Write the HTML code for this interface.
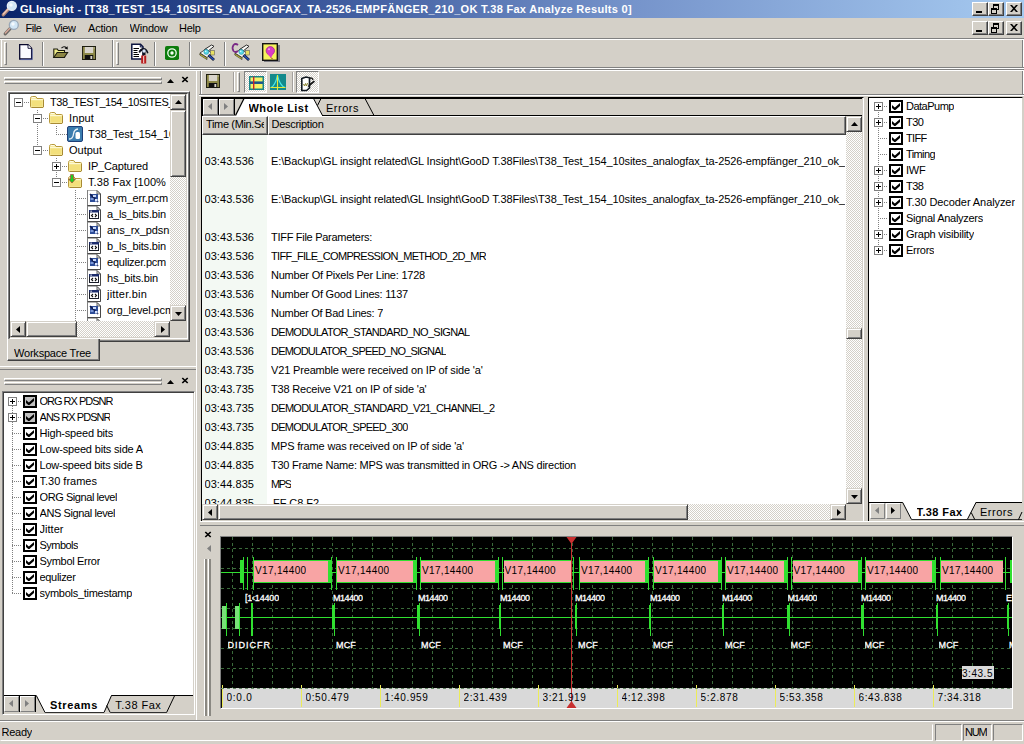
<!DOCTYPE html><html><head><meta charset="utf-8"><title>GLInsight</title><style>
    *{box-sizing:border-box;margin:0;padding:0}
    html,body{width:1024px;height:744px;overflow:hidden;background:#d4d0c8}
    body{position:relative;font-family:"Liberation Sans",sans-serif;font-size:11px;color:#000;line-height:13px}
    .a{position:absolute}
    .t{position:absolute;white-space:nowrap;overflow:hidden}
    .hl{position:absolute;height:1px}
    .vl{position:absolute;width:1px}
    .btn{position:absolute;background:#d4d0c8;border:1px solid;border-color:#fff #404040 #404040 #fff;box-shadow:inset -1px -1px 0 #808080}
    .sb{position:absolute;background:#d4d0c8;border:1px solid;border-color:#d4d0c8 #404040 #404040 #d4d0c8;box-shadow:inset 1px 1px 0 #fff, inset -1px -1px 0 #808080}
    .trk{position:absolute;background-color:#e9e7e3;background-image:conic-gradient(#fff 25%,#d4d0c8 0 50%,#fff 0 75%,#d4d0c8 0);background-size:2px 2px}
    .sunk{position:absolute;border:1px solid;border-color:#808080 #fff #fff #808080;box-shadow:inset 1px 1px 0 #404040, inset -1px -1px 0 #d4d0c8;background:#fff}
    .cb{position:absolute;width:14px;height:13px;border:2px solid #000;background:#fff}
    .cbg{background:#c0c0c0}
    .dotH{position:absolute;height:1px;background-image:linear-gradient(90deg,#808080 50%,transparent 0);background-size:2px 1px}
    .dotV{position:absolute;width:1px;background-image:linear-gradient(180deg,#808080 50%,transparent 0);background-size:1px 2px}
    .pm{position:absolute;width:9px;height:9px;border:1px solid #808080;background:#fff}
    .pm:before{content:"";position:absolute;left:1px;top:3px;width:5px;height:1px;background:#000}
    .pm.p:after{content:"";position:absolute;left:3px;top:1px;width:1px;height:5px;background:#000}
    svg{position:absolute;overflow:visible}
    </style></head><body>
<div class="a" style="left:0;top:0;width:1024px;height:18px;background:linear-gradient(90deg,#0a246a 0%,#39569a 30%,#7694cb 62%,#a6caf0 100%)"></div>
<div class="t" style="left:20px;top:3px;font-weight:bold;color:#fff;letter-spacing:0.306px;">GLInsight - [T38_TEST_154_10SITES_ANALOGFAX_TA-2526-EMPFÄNGER_210_OK T.38 Fax Analyze Results 0]</div>
<svg style="left:1px;top:0px" width="18" height="18" viewBox="0 0 18 18">
<line x1="2.2" y1="14.8" x2="7.3" y2="9.3" stroke="#b08878" stroke-width="3.2" stroke-linecap="round"/>
<line x1="2.4" y1="14" x2="6.6" y2="9.5" stroke="#f0c8b8" stroke-width="1.3" stroke-linecap="round"/>
<circle cx="10.8" cy="5.9" r="4.5" fill="#d2e6f5" stroke="#e6eef6" stroke-width="1.3"/>
<circle cx="10" cy="5" r="1.7" fill="#fff" opacity=".75"/>
</svg>
<svg style="left:3.4px;top:19.4px" width="18" height="18" viewBox="0 0 18 18">
<line x1="2.2" y1="14.8" x2="7.3" y2="9.3" stroke="#6e6a66" stroke-width="3.2" stroke-linecap="round"/>
<line x1="2.4" y1="14" x2="6.6" y2="9.5" stroke="#d8a898" stroke-width="1.3" stroke-linecap="round"/>
<circle cx="10.8" cy="5.9" r="4.5" fill="#d2e6f5" stroke="#9aa8b8" stroke-width="1.3"/>
<circle cx="10" cy="5" r="1.7" fill="#fff" opacity=".75"/>
</svg>
<div class="btn" style="left:972px;top:2px;width:16px;height:14px"><div class="a" style="left:3px;top:8px;width:6px;height:2px;background:#000"></div></div>
<div class="btn" style="left:988px;top:2px;width:16px;height:14px"><div class="a" style="left:4px;top:1px;width:6px;height:6px;border:1px solid #000;border-top-width:2px"></div><div class="a" style="left:2px;top:5px;width:6px;height:6px;border:1px solid #000;border-top-width:2px;background:#d4d0c8"></div></div>
<div class="btn" style="left:1006px;top:2px;width:16px;height:14px"><svg style="left:3px;top:2px" width="8" height="7" viewBox="0 0 8 7"><path d="M0 0H2L4 2.2L6 0H8L5 3.5L8 7H6L4 4.8L2 7H0L3 3.5Z" fill="#000"/></svg></div>
<div class="btn" style="left:972px;top:21px;width:16px;height:14px"><div class="a" style="left:3px;top:8px;width:6px;height:2px;background:#000"></div></div>
<div class="btn" style="left:988px;top:21px;width:16px;height:14px"><div class="a" style="left:4px;top:1px;width:6px;height:6px;border:1px solid #000;border-top-width:2px"></div><div class="a" style="left:2px;top:5px;width:6px;height:6px;border:1px solid #000;border-top-width:2px;background:#d4d0c8"></div></div>
<div class="btn" style="left:1006px;top:21px;width:16px;height:14px"><svg style="left:3px;top:2px" width="8" height="7" viewBox="0 0 8 7"><path d="M0 0H2L4 2.2L6 0H8L5 3.5L8 7H6L4 4.8L2 7H0L3 3.5Z" fill="#000"/></svg></div>
<div class="t" style="left:25.5px;top:22px;letter-spacing:-0.434px;">File</div>
<div class="t" style="left:53.5px;top:22px;letter-spacing:-0.414px;">View</div>
<div class="t" style="left:88px;top:22px;letter-spacing:-0.180px;">Action</div>
<div class="t" style="left:129.5px;top:22px;letter-spacing:-0.188px;">Window</div>
<div class="t" style="left:179px;top:22px;letter-spacing:-0.281px;">Help</div>
<div class="hl" style="left:0;top:38px;width:1024px;background:#808080"></div>
<div class="hl" style="left:0;top:39px;width:1024px;background:#fff"></div>
<div class="vl" style="left:1px;top:40px;height:27px;background:#fff"></div>
<div class="hl" style="left:0;top:67px;width:1024px;background:#808080"></div>
<div class="hl" style="left:0;top:68px;width:1024px;background:#fff"></div>
<div class="hl" style="left:0;top:69px;width:1024px;background:#808080"></div>
<div class="hl" style="left:0;top:70px;width:1024px;background:#fff"></div>
<div class="a" style="left:4px;top:42px;width:3px;height:23px;border:1px solid;border-color:#fff #808080 #808080 #fff"></div>
<div class="a" style="left:116px;top:42px;width:3px;height:23px;border:1px solid;border-color:#fff #808080 #808080 #fff"></div>
<div class="vl" style="left:112px;top:40px;height:27px;background:#808080"></div><div class="vl" style="left:113px;top:40px;height:27px;background:#fff"></div>
<div class="vl" style="left:42px;top:42px;height:24px;background:#808080"></div><div class="vl" style="left:43px;top:42px;height:24px;background:#fff"></div>
<div class="vl" style="left:154px;top:42px;height:24px;background:#808080"></div><div class="vl" style="left:155px;top:42px;height:24px;background:#fff"></div>
<div class="vl" style="left:189px;top:42px;height:24px;background:#808080"></div><div class="vl" style="left:190px;top:42px;height:24px;background:#fff"></div>
<div class="vl" style="left:224px;top:42px;height:24px;background:#808080"></div><div class="vl" style="left:225px;top:42px;height:24px;background:#fff"></div>
<svg style="left:19px;top:44px" width="14" height="16" viewBox="0 0 14 16">
<path d="M.7 .7L9 .7L12.6 4.3L12.6 15L.7 15Z" fill="#fbfbff" stroke="#08082c" stroke-width="1.3"/>
<path d="M9 .7L9 4.3L12.6 4.3" fill="#fff" stroke="#08082c" stroke-width=".9"/>
<path d="M13.2 5L13.2 15.6L1.5 15.6" fill="none" stroke="#5060a8" stroke-width=".8"/>
</svg><svg style="left:53px;top:45px" width="16" height="14" viewBox="0 0 16 14">
<path d="M8.5 3.2Q11 0.3 13.6 3" fill="none" stroke="#101010" stroke-width="1.1"/><path d="M11.6 3.6L14.8 4.6L14.6 1.3Z" fill="#101010"/>
<path d="M.8 4L4.3 4L5.3 5.5L11.5 5.5L11.5 12.5L.8 12.5Z" fill="#eeec88" stroke="#1c1c10" stroke-width="1.1"/>
<path d="M.8 12.5L4.2 7.5L14.6 7.5L11.3 12.5Z" fill="#8c8644" stroke="#1c1c10" stroke-width="1.1"/>
</svg><svg style="left:82px;top:46px" width="14" height="14" viewBox="0 0 15 14" preserveAspectRatio="none">
<rect x=".5" y=".5" width="14" height="13" fill="#8c8848" stroke="#1c1c10" stroke-width="1"/>
<rect x="3" y="1" width="9" height="6" fill="#d8d4cc"/>
<rect x="3" y="9" width="9" height="4.5" fill="#101010"/>
<rect x="9" y="10" width="2" height="3" fill="#d8d4cc"/>
<rect x="12.5" y="1.5" width="1" height="1" fill="#d8d4cc"/>
</svg><svg style="left:131px;top:43px" width="19" height="21" viewBox="0 0 19 21">
<path d="M.8 1.2L9.5 1.2L12 3.7L12 16L.8 16Z" fill="#fff" stroke="#0c1440" stroke-width="1.5"/>
<path d="M9.3 1.2L9.3 4L12 4" fill="none" stroke="#0c1440" stroke-width="1"/>
<path d="M2.5 5.5H8M2.5 7.5H6.5M2.5 9.5H6.5M2.5 11.5H8M2.5 13.5H8" stroke="#000" stroke-width="1"/>
<path d="M7.5 9Q9 5 12.5 5Q16 5 17.5 10L16 10.5Q15.5 8 14.5 8L14.5 12L11.5 12L11.5 8Q9.5 8 9 10Z" fill="#0c1020"/>
<circle cx="13" cy="8" r="1.7" fill="#d8e4f8"/>
<rect x="10.2" y="12.5" width="5" height="8" fill="#b81c1c"/><rect x="12.2" y="13" width="1" height="7" fill="#f4e0e0"/>
</svg><svg style="left:165px;top:46px" width="14" height="14" viewBox="0 0 14 14">
<rect x="0" y="0" width="14" height="14" rx="1.8" fill="#0c7c0c"/>
<circle cx="7" cy="7" r="4.2" fill="none" stroke="#f0fff0" stroke-width="1.3"/>
<circle cx="7" cy="7" r="1.7" fill="#f4fff4"/>
</svg><svg style="left:199px;top:44px" width="17" height="17" viewBox="0 0 17 17">
<path d="M5.5 5.5L12.5 1L15 2.3L8.5 7.5Z" fill="#fbfbf8" stroke="#181818" stroke-width=".9"/>
<path d="M1 9L7 5L13 9.5L8 13.5Z" fill="#f4f4ee" stroke="#282828" stroke-width=".8"/>
<path d="M.8 9.5L8 14L8 15.6L.8 11Z" fill="#e6dc30" stroke="#202020" stroke-width=".6"/>
<rect x="11.5" y="6.5" width="4" height="4.5" fill="#e8e060" stroke="#606060" stroke-width=".6"/>
<circle cx="7.3" cy="8" r="2.4" fill="#58d8e8" stroke="#1890a8" stroke-width=".6"/>
<circle cx="6.7" cy="7.3" r=".8" fill="#e8ffff"/>
<path d="M9.5 11L15 16" stroke="#101828" stroke-width="2.8"/>
<path d="M9.8 11.2L14.8 15.8" stroke="#2850c0" stroke-width="1.4"/>
</svg><svg style="left:234px;top:44px" width="17" height="17" viewBox="0 0 17 17">
<path d="M5.5 5.5L12.5 1L15 2.3L8.5 7.5Z" fill="#fbfbf8" stroke="#181818" stroke-width=".9"/>
<path d="M1 9L7 5L13 9.5L8 13.5Z" fill="#f4f4ee" stroke="#282828" stroke-width=".8"/>
<path d="M.8 9.5L8 14L8 15.6L.8 11Z" fill="#e6dc30" stroke="#202020" stroke-width=".6"/>
<rect x="11.5" y="6.5" width="4" height="4.5" fill="#e8e060" stroke="#606060" stroke-width=".6"/>
<circle cx="7.3" cy="8" r="2.4" fill="#58d8e8" stroke="#1890a8" stroke-width=".6"/>
<circle cx="6.7" cy="7.3" r=".8" fill="#e8ffff"/>
<path d="M9.5 11L15 16" stroke="#101828" stroke-width="2.8"/>
<path d="M9.8 11.2L14.8 15.8" stroke="#2850c0" stroke-width="1.4"/>
</svg><svg style="left:231px;top:43px" width="8" height="10" viewBox="0 0 8 10"><path d="M7 2Q4.5 0 2.5 2Q0.5 5 2.5 8Q4.5 10 7 8" fill="none" stroke="#7a2a86" stroke-width="1.7"/></svg><svg style="left:262px;top:43px" width="19" height="20" viewBox="0 0 19 20">
<rect x="2" y="2" width="16" height="17" fill="#7c7c84"/>
<rect x=".7" y=".7" width="14.6" height="16.6" fill="#f6f25c" stroke="#141414" stroke-width="1.4"/>
<circle cx="8.3" cy="7.8" r="4.2" fill="#dc3cc4" stroke="#98208c" stroke-width=".7"/>
<path d="M5.2 10.8L9 15L11.2 10.8Z" fill="#dc3cc4"/>
<circle cx="7" cy="6.3" r="1" fill="#f8c0f0" opacity=".8"/>
<path d="M9 14.5L10.5 16" stroke="#902020" stroke-width="1"/>
</svg>
<div class="a" style="left:4px;top:77px;width:158px;height:3px;border:1px solid;border-color:#fff #808080 #808080 #fff"></div><div class="a" style="left:4px;top:81px;width:158px;height:3px;border:1px solid;border-color:#fff #808080 #808080 #fff"></div><svg style="left:167px;top:79px" width="7" height="4" viewBox="0 0 7 4"><path d="M0 4L3.5 0L7 4Z" fill="#000"/></svg><svg style="left:182px;top:77px" width="6" height="5" viewBox="0 0 6 5"><path d="M0.3 0L5.7 5M0.3 5L5.7 0" stroke="#000" stroke-width="1.7" fill="none"/></svg>
<div class="a" style="left:7px;top:91px;width:183px;height:251px;border:1px solid;border-color:#fff #404040 #404040 #fff;box-shadow:inset 1px 1px 0 #808080, inset -1px -1px 0 #808080"></div>
<div class="a" style="left:9px;top:93px;width:179px;height:246px;border:1px solid;border-color:#404040 #fff #fff #404040"></div>
<div class="a" style="left:10px;top:94px;width:160px;height:227px;background:#fff;overflow:hidden" id="tree1">
<div class="dotH" style="left:14px;top:8px;width:5px"></div><div class="dotV" style="left:27px;top:16px;height:40px"></div><div class="dotH" style="left:33px;top:24px;width:5px"></div><div class="dotH" style="left:33px;top:56px;width:5px"></div><div class="dotV" style="left:46px;top:32px;height:8px"></div><div class="dotH" style="left:46px;top:40px;width:11px"></div><div class="dotV" style="left:46px;top:64px;height:24px"></div><div class="dotH" style="left:52px;top:72px;width:5px"></div><div class="dotH" style="left:52px;top:88px;width:5px"></div><div class="dotV" style="left:65px;top:96px;height:132px"></div><div class="dotH" style="left:65px;top:104px;width:12px"></div><div class="dotH" style="left:65px;top:120px;width:12px"></div><div class="dotH" style="left:65px;top:136px;width:12px"></div><div class="dotH" style="left:65px;top:152px;width:12px"></div><div class="dotH" style="left:65px;top:168px;width:12px"></div><div class="dotH" style="left:65px;top:184px;width:12px"></div><div class="dotH" style="left:65px;top:200px;width:12px"></div><div class="dotH" style="left:65px;top:216px;width:12px"></div><div class="dotH" style="left:65px;top:232px;width:12px"></div><div class="pm" style="left:4px;top:4px"></div><svg style="left:19px;top:1px" width="16" height="14" viewBox="0 0 16 14">
<path d="M1.5 3.5Q1.5 1.5 3.5 1.5L6 1.5Q7.5 1.5 8 3.5L13.5 3.5Q14.5 3.5 14.5 4.5L14.5 11.5Q14.5 12.5 13.5 12.5L2.5 12.5Q1.5 12.5 1.5 11.5Z" fill="#f7eca2" stroke="#b8993c" stroke-width="1"/>
<path d="M2.5 5.5L13.5 5.5L13.5 11.5L2.5 11.5Z" fill="#f3e07c"/>
<path d="M2 4.5L13.5 4.5" stroke="#fdf8d4" stroke-width="1"/>
<path d="M2.5 2.5L6.5 2.5" stroke="#fffce8" stroke-width="1"/>
<path d="M14.5 5L14.5 12M3 12.5L14 12.5" stroke="#a88a34" stroke-width="1" fill="none"/>
</svg><div class="pm" style="left:23px;top:20px"></div><svg style="left:38px;top:17px" width="16" height="14" viewBox="0 0 16 14">
<path d="M1.5 3.5Q1.5 1.5 3.5 1.5L6 1.5Q7.5 1.5 8 3.5L13.5 3.5Q14.5 3.5 14.5 4.5L14.5 11.5Q14.5 12.5 13.5 12.5L2.5 12.5Q1.5 12.5 1.5 11.5Z" fill="#f7eca2" stroke="#b8993c" stroke-width="1"/>
<path d="M2.5 5.5L13.5 5.5L13.5 11.5L2.5 11.5Z" fill="#f3e07c"/>
<path d="M2 4.5L13.5 4.5" stroke="#fdf8d4" stroke-width="1"/>
<path d="M2.5 2.5L6.5 2.5" stroke="#fffce8" stroke-width="1"/>
<path d="M14.5 5L14.5 12M3 12.5L14 12.5" stroke="#a88a34" stroke-width="1" fill="none"/>
</svg><svg style="left:57px;top:32px" width="16" height="16" viewBox="0 0 16 16">
<rect x=".5" y=".5" width="15" height="15" rx="1.5" fill="#3b7cae" stroke="#1c3f78" stroke-width="1"/>
<path d="M2 13Q6 13 6.5 8Q7 3.5 11 3" fill="none" stroke="#e8f0f8" stroke-width="1.3"/>
<rect x="8.5" y="6" width="4.5" height="7" rx="1.5" fill="#fff"/>
</svg><div class="pm" style="left:23px;top:52px"></div><svg style="left:38px;top:49px" width="16" height="14" viewBox="0 0 16 14">
<path d="M1.5 3.5Q1.5 1.5 3.5 1.5L6 1.5Q7.5 1.5 8 3.5L13.5 3.5Q14.5 3.5 14.5 4.5L14.5 11.5Q14.5 12.5 13.5 12.5L2.5 12.5Q1.5 12.5 1.5 11.5Z" fill="#f7eca2" stroke="#b8993c" stroke-width="1"/>
<path d="M2.5 5.5L13.5 5.5L13.5 11.5L2.5 11.5Z" fill="#f3e07c"/>
<path d="M2 4.5L13.5 4.5" stroke="#fdf8d4" stroke-width="1"/>
<path d="M2.5 2.5L6.5 2.5" stroke="#fffce8" stroke-width="1"/>
<path d="M14.5 5L14.5 12M3 12.5L14 12.5" stroke="#a88a34" stroke-width="1" fill="none"/>
</svg><div class="pm p" style="left:42px;top:68px"></div><svg style="left:57px;top:65px" width="16" height="14" viewBox="0 0 16 14">
<path d="M1.5 3.5Q1.5 1.5 3.5 1.5L6 1.5Q7.5 1.5 8 3.5L13.5 3.5Q14.5 3.5 14.5 4.5L14.5 11.5Q14.5 12.5 13.5 12.5L2.5 12.5Q1.5 12.5 1.5 11.5Z" fill="#f7eca2" stroke="#b8993c" stroke-width="1"/>
<path d="M2.5 5.5L13.5 5.5L13.5 11.5L2.5 11.5Z" fill="#f3e07c"/>
<path d="M2 4.5L13.5 4.5" stroke="#fdf8d4" stroke-width="1"/>
<path d="M2.5 2.5L6.5 2.5" stroke="#fffce8" stroke-width="1"/>
<path d="M14.5 5L14.5 12M3 12.5L14 12.5" stroke="#a88a34" stroke-width="1" fill="none"/>
</svg><div class="pm" style="left:42px;top:84px"></div><svg style="left:57px;top:81px" width="16" height="14" viewBox="0 0 16 14">
<path d="M1.5 3.5Q1.5 1.5 3.5 1.5L6 1.5Q7.5 1.5 8 3.5L13.5 3.5Q14.5 3.5 14.5 4.5L14.5 11.5Q14.5 12.5 13.5 12.5L2.5 12.5Q1.5 12.5 1.5 11.5Z" fill="#f7eca2" stroke="#b8993c" stroke-width="1"/>
<path d="M2.5 5.5L13.5 5.5L13.5 11.5L2.5 11.5Z" fill="#f3e07c"/>
<path d="M2 4.5L13.5 4.5" stroke="#fdf8d4" stroke-width="1"/>
<path d="M2.5 2.5L6.5 2.5" stroke="#fffce8" stroke-width="1"/>
<path d="M14.5 5L14.5 12M3 12.5L14 12.5" stroke="#a88a34" stroke-width="1" fill="none"/>
</svg><svg style="left:58px;top:80px" width="9" height="10" viewBox="0 0 9 10"><path d="M2.5 0.5L5.5 0.5L5.5 5L7.5 5L4 9L0.5 5L2.5 5Z" fill="#22cc22" stroke="#b03030" stroke-width=".6"/></svg><div class="t" style="left:40px;top:2px;letter-spacing:-0.472px;">T38_TEST_154_10SITES_</div><div class="t" style="left:59px;top:18px;letter-spacing:0.106px;">Input</div><div class="t" style="left:78px;top:34px;letter-spacing:-0.072px;">T38_Test_154_10</div><div class="t" style="left:59px;top:50px;letter-spacing:-0.005px;">Output</div><div class="t" style="left:78px;top:66px;letter-spacing:-0.161px;">IP_Captured</div><div class="t" style="left:78px;top:82px;letter-spacing:0.112px;">T.38 Fax [100%</div><svg style="left:77px;top:96px" width="15" height="16" viewBox="0 0 15 16">
<path d="M.5 .5L10 .5L13.5 4L13.5 15.5L.5 15.5Z" fill="#fff" stroke="#b0b0b0" stroke-width="1"/>
<path d="M.5 0L.5 16" stroke="#808080" stroke-width="1"/>
<path d="M10 .5L10 4L13.5 4" fill="#f0f0f0" stroke="#606060" stroke-width="1"/>
<path d="M10 .5L13.5 4L13.5 15.5L.5 15.5" fill="none" stroke="#484848" stroke-width="1"/><rect x="3" y="4" width="8" height="8" fill="#2c4c98"/><path d="M3 4L11 12" stroke="#101c50" stroke-width="1.6"/><rect x="6" y="5" width="3" height="2" fill="#c8d8f8"/><rect x="3.5" y="8" width="3" height="2" fill="#7c98d8"/><rect x="8" y="9" width="2.5" height="2.5" fill="#d8e4ff"/></svg><div class="t" style="left:97px;top:98px;letter-spacing:-0.179px;">sym_err.pcm</div><svg style="left:77px;top:112px" width="15" height="16" viewBox="0 0 15 16">
<path d="M.5 .5L10 .5L13.5 4L13.5 15.5L.5 15.5Z" fill="#fff" stroke="#b0b0b0" stroke-width="1"/>
<path d="M.5 0L.5 16" stroke="#808080" stroke-width="1"/>
<path d="M10 .5L10 4L13.5 4" fill="#f0f0f0" stroke="#606060" stroke-width="1"/>
<path d="M10 .5L13.5 4L13.5 15.5L.5 15.5" fill="none" stroke="#484848" stroke-width="1"/><rect x="2.5" y="4.5" width="9" height="8" fill="#fff" stroke="#181c28" stroke-width="1"/><rect x="2" y="4" width="10" height="2.5" fill="#1c2c6c"/><rect x="3.5" y="4.6" width="1.2" height="1.2" fill="#fff"/><path d="M6 8L4.5 9.5L6 11M8 8L9.5 9.5L8 11" fill="none" stroke="#101010" stroke-width="1.1"/></svg><div class="t" style="left:97px;top:114px;letter-spacing:-0.166px;">a_ls_bits.bin</div><svg style="left:77px;top:128px" width="15" height="16" viewBox="0 0 15 16">
<path d="M.5 .5L10 .5L13.5 4L13.5 15.5L.5 15.5Z" fill="#fff" stroke="#b0b0b0" stroke-width="1"/>
<path d="M.5 0L.5 16" stroke="#808080" stroke-width="1"/>
<path d="M10 .5L10 4L13.5 4" fill="#f0f0f0" stroke="#606060" stroke-width="1"/>
<path d="M10 .5L13.5 4L13.5 15.5L.5 15.5" fill="none" stroke="#484848" stroke-width="1"/><rect x="3" y="4" width="8" height="8" fill="#2c4c98"/><path d="M3 4L11 12" stroke="#101c50" stroke-width="1.6"/><rect x="6" y="5" width="3" height="2" fill="#c8d8f8"/><rect x="3.5" y="8" width="3" height="2" fill="#7c98d8"/><rect x="8" y="9" width="2.5" height="2.5" fill="#d8e4ff"/></svg><div class="t" style="left:97px;top:130px;letter-spacing:-0.055px;">ans_rx_pdsnr</div><svg style="left:77px;top:144px" width="15" height="16" viewBox="0 0 15 16">
<path d="M.5 .5L10 .5L13.5 4L13.5 15.5L.5 15.5Z" fill="#fff" stroke="#b0b0b0" stroke-width="1"/>
<path d="M.5 0L.5 16" stroke="#808080" stroke-width="1"/>
<path d="M10 .5L10 4L13.5 4" fill="#f0f0f0" stroke="#606060" stroke-width="1"/>
<path d="M10 .5L13.5 4L13.5 15.5L.5 15.5" fill="none" stroke="#484848" stroke-width="1"/><rect x="2.5" y="4.5" width="9" height="8" fill="#fff" stroke="#181c28" stroke-width="1"/><rect x="2" y="4" width="10" height="2.5" fill="#1c2c6c"/><rect x="3.5" y="4.6" width="1.2" height="1.2" fill="#fff"/><path d="M6 8L4.5 9.5L6 11M8 8L9.5 9.5L8 11" fill="none" stroke="#101010" stroke-width="1.1"/></svg><div class="t" style="left:97px;top:146px;letter-spacing:-0.166px;">b_ls_bits.bin</div><svg style="left:77px;top:160px" width="15" height="16" viewBox="0 0 15 16">
<path d="M.5 .5L10 .5L13.5 4L13.5 15.5L.5 15.5Z" fill="#fff" stroke="#b0b0b0" stroke-width="1"/>
<path d="M.5 0L.5 16" stroke="#808080" stroke-width="1"/>
<path d="M10 .5L10 4L13.5 4" fill="#f0f0f0" stroke="#606060" stroke-width="1"/>
<path d="M10 .5L13.5 4L13.5 15.5L.5 15.5" fill="none" stroke="#484848" stroke-width="1"/><rect x="3" y="4" width="8" height="8" fill="#2c4c98"/><path d="M3 4L11 12" stroke="#101c50" stroke-width="1.6"/><rect x="6" y="5" width="3" height="2" fill="#c8d8f8"/><rect x="3.5" y="8" width="3" height="2" fill="#7c98d8"/><rect x="8" y="9" width="2.5" height="2.5" fill="#d8e4ff"/></svg><div class="t" style="left:97px;top:162px;letter-spacing:-0.230px;">equlizer.pcm</div><svg style="left:77px;top:176px" width="15" height="16" viewBox="0 0 15 16">
<path d="M.5 .5L10 .5L13.5 4L13.5 15.5L.5 15.5Z" fill="#fff" stroke="#b0b0b0" stroke-width="1"/>
<path d="M.5 0L.5 16" stroke="#808080" stroke-width="1"/>
<path d="M10 .5L10 4L13.5 4" fill="#f0f0f0" stroke="#606060" stroke-width="1"/>
<path d="M10 .5L13.5 4L13.5 15.5L.5 15.5" fill="none" stroke="#484848" stroke-width="1"/><rect x="2.5" y="4.5" width="9" height="8" fill="#fff" stroke="#181c28" stroke-width="1"/><rect x="2" y="4" width="10" height="2.5" fill="#1c2c6c"/><rect x="3.5" y="4.6" width="1.2" height="1.2" fill="#fff"/><path d="M6 8L4.5 9.5L6 11M8 8L9.5 9.5L8 11" fill="none" stroke="#101010" stroke-width="1.1"/></svg><div class="t" style="left:97px;top:178px;letter-spacing:-0.145px;">hs_bits.bin</div><svg style="left:77px;top:192px" width="15" height="16" viewBox="0 0 15 16">
<path d="M.5 .5L10 .5L13.5 4L13.5 15.5L.5 15.5Z" fill="#fff" stroke="#b0b0b0" stroke-width="1"/>
<path d="M.5 0L.5 16" stroke="#808080" stroke-width="1"/>
<path d="M10 .5L10 4L13.5 4" fill="#f0f0f0" stroke="#606060" stroke-width="1"/>
<path d="M10 .5L13.5 4L13.5 15.5L.5 15.5" fill="none" stroke="#484848" stroke-width="1"/><rect x="2.5" y="4.5" width="9" height="8" fill="#fff" stroke="#181c28" stroke-width="1"/><rect x="2" y="4" width="10" height="2.5" fill="#1c2c6c"/><rect x="3.5" y="4.6" width="1.2" height="1.2" fill="#fff"/><path d="M6 8L4.5 9.5L6 11M8 8L9.5 9.5L8 11" fill="none" stroke="#101010" stroke-width="1.1"/></svg><div class="t" style="left:97px;top:194px;letter-spacing:0.208px;">jitter.bin</div><svg style="left:77px;top:208px" width="15" height="16" viewBox="0 0 15 16">
<path d="M.5 .5L10 .5L13.5 4L13.5 15.5L.5 15.5Z" fill="#fff" stroke="#b0b0b0" stroke-width="1"/>
<path d="M.5 0L.5 16" stroke="#808080" stroke-width="1"/>
<path d="M10 .5L10 4L13.5 4" fill="#f0f0f0" stroke="#606060" stroke-width="1"/>
<path d="M10 .5L13.5 4L13.5 15.5L.5 15.5" fill="none" stroke="#484848" stroke-width="1"/><rect x="3" y="4" width="8" height="8" fill="#2c4c98"/><path d="M3 4L11 12" stroke="#101c50" stroke-width="1.6"/><rect x="6" y="5" width="3" height="2" fill="#c8d8f8"/><rect x="3.5" y="8" width="3" height="2" fill="#7c98d8"/><rect x="8" y="9" width="2.5" height="2.5" fill="#d8e4ff"/></svg><div class="t" style="left:97px;top:210px;letter-spacing:-0.114px;">org_level.pcm</div><svg style="left:77px;top:224px" width="15" height="16" viewBox="0 0 15 16">
<path d="M.5 .5L10 .5L13.5 4L13.5 15.5L.5 15.5Z" fill="#fff" stroke="#b0b0b0" stroke-width="1"/>
<path d="M.5 0L.5 16" stroke="#808080" stroke-width="1"/>
<path d="M10 .5L10 4L13.5 4" fill="#f0f0f0" stroke="#606060" stroke-width="1"/>
<path d="M10 .5L13.5 4L13.5 15.5L.5 15.5" fill="none" stroke="#484848" stroke-width="1"/><rect x="2.5" y="4.5" width="9" height="8" fill="#fff" stroke="#181c28" stroke-width="1"/><rect x="2" y="4" width="10" height="2.5" fill="#1c2c6c"/><rect x="3.5" y="4.6" width="1.2" height="1.2" fill="#fff"/><path d="M6 8L4.5 9.5L6 11M8 8L9.5 9.5L8 11" fill="none" stroke="#101010" stroke-width="1.1"/></svg>
</div>
<div class="trk" style="left:170px;top:94px;width:16px;height:227px"></div>
<div class="sb" style="left:170px;top:94px;width:16px;height:16px"><svg style="left:4px;top:5px" width="7" height="4"><path d="M0 4L3.5 0L7 4Z" fill="#000"/></svg></div>
<div class="sb" style="left:170px;top:110px;width:16px;height:67px"></div>
<div class="sb" style="left:170px;top:305px;width:16px;height:16px"><svg style="left:4px;top:6px" width="7" height="4"><path d="M0 0L3.5 4L7 0Z" fill="#000"/></svg></div>
<div class="trk" style="left:10px;top:321px;width:160px;height:16px"></div>
<div class="sb" style="left:10px;top:321px;width:16px;height:16px"><svg style="left:5px;top:4px" width="4" height="7"><path d="M4 0L0 3.5L4 7Z" fill="#000"/></svg></div>
<div class="sb" style="left:26px;top:321px;width:51px;height:16px"></div>
<div class="sb" style="left:154px;top:321px;width:16px;height:16px"><svg style="left:6px;top:4px" width="4" height="7"><path d="M0 0L4 3.5L0 7Z" fill="#000"/></svg></div>
<div class="a" style="left:7px;top:339px;width:93px;height:22px;background:#d4d0c8;border-style:solid;border-width:0 1px 1px 1px;border-color:#404040 #404040 #404040 #fff;box-shadow:inset -1px -1px 0 #808080"></div>
<div class="t" style="left:14px;top:347px;letter-spacing:-0.206px;">Workspace Tree</div>
<div class="hl" style="left:0;top:366px;width:196px;background:#fff"></div>
<div class="hl" style="left:0;top:369px;width:196px;background:#808080"></div>
<div class="a" style="left:4px;top:378px;width:158px;height:3px;border:1px solid;border-color:#fff #808080 #808080 #fff"></div><div class="a" style="left:4px;top:382px;width:158px;height:3px;border:1px solid;border-color:#fff #808080 #808080 #fff"></div><svg style="left:167px;top:380px" width="7" height="4" viewBox="0 0 7 4"><path d="M0 4L3.5 0L7 4Z" fill="#000"/></svg><svg style="left:182px;top:378px" width="6" height="5" viewBox="0 0 6 5"><path d="M0.3 0L5.7 5M0.3 5L5.7 0" stroke="#000" stroke-width="1.7" fill="none"/></svg>
<div class="sunk" style="left:2px;top:391px;width:193px;height:324px"></div>
<div class="a" style="left:4px;top:393px;width:189px;height:302px;background:#fff;overflow:hidden" id="tree2">
<div class="dotV" style="left:8px;top:13px;height:188px"></div><div class="pm p" style="left:4px;top:4px"></div><div class="dotH" style="left:14px;top:8px;width:4px"></div><div class="cb cbg" style="left:19px;top:2px"><svg style="left:1px;top:1px" width="8" height="7" viewBox="0 0 7 7" preserveAspectRatio="none"><path d="M0 2L0 5L2 7L3 7L7 3L7 0L2.5 4.5Z" fill="#000"/></svg></div><div class="t" style="left:35.5px;top:2px;letter-spacing:-0.997px;">ORG RX PDSNR</div><div class="pm p" style="left:4px;top:20px"></div><div class="dotH" style="left:14px;top:24px;width:4px"></div><div class="cb cbg" style="left:19px;top:18px"><svg style="left:1px;top:1px" width="8" height="7" viewBox="0 0 7 7" preserveAspectRatio="none"><path d="M0 2L0 5L2 7L3 7L7 3L7 0L2.5 4.5Z" fill="#000"/></svg></div><div class="t" style="left:35.5px;top:18px;letter-spacing:-0.961px;">ANS RX PDSNR</div><div class="dotH" style="left:8px;top:40px;width:10px"></div><div class="cb" style="left:19px;top:34px"><svg style="left:1px;top:1px" width="8" height="7" viewBox="0 0 7 7" preserveAspectRatio="none"><path d="M0 2L0 5L2 7L3 7L7 3L7 0L2.5 4.5Z" fill="#000"/></svg></div><div class="t" style="left:35.5px;top:34px;letter-spacing:-0.196px;">High-speed bits</div><div class="dotH" style="left:8px;top:56px;width:10px"></div><div class="cb" style="left:19px;top:50px"><svg style="left:1px;top:1px" width="8" height="7" viewBox="0 0 7 7" preserveAspectRatio="none"><path d="M0 2L0 5L2 7L3 7L7 3L7 0L2.5 4.5Z" fill="#000"/></svg></div><div class="t" style="left:35.5px;top:50px;letter-spacing:-0.167px;">Low-speed bits side A</div><div class="dotH" style="left:8px;top:72px;width:10px"></div><div class="cb" style="left:19px;top:66px"><svg style="left:1px;top:1px" width="8" height="7" viewBox="0 0 7 7" preserveAspectRatio="none"><path d="M0 2L0 5L2 7L3 7L7 3L7 0L2.5 4.5Z" fill="#000"/></svg></div><div class="t" style="left:35.5px;top:66px;letter-spacing:-0.220px;">Low-speed bits side B</div><div class="dotH" style="left:8px;top:88px;width:10px"></div><div class="cb" style="left:19px;top:82px"><svg style="left:1px;top:1px" width="8" height="7" viewBox="0 0 7 7" preserveAspectRatio="none"><path d="M0 2L0 5L2 7L3 7L7 3L7 0L2.5 4.5Z" fill="#000"/></svg></div><div class="t" style="left:35.5px;top:82px;letter-spacing:0.003px;">T.30 frames</div><div class="dotH" style="left:8px;top:104px;width:10px"></div><div class="cb" style="left:19px;top:98px"><svg style="left:1px;top:1px" width="8" height="7" viewBox="0 0 7 7" preserveAspectRatio="none"><path d="M0 2L0 5L2 7L3 7L7 3L7 0L2.5 4.5Z" fill="#000"/></svg></div><div class="t" style="left:35.5px;top:98px;letter-spacing:-0.430px;">ORG Signal level</div><div class="dotH" style="left:8px;top:120px;width:10px"></div><div class="cb" style="left:19px;top:114px"><svg style="left:1px;top:1px" width="8" height="7" viewBox="0 0 7 7" preserveAspectRatio="none"><path d="M0 2L0 5L2 7L3 7L7 3L7 0L2.5 4.5Z" fill="#000"/></svg></div><div class="t" style="left:35.5px;top:114px;letter-spacing:-0.402px;">ANS Signal level</div><div class="dotH" style="left:8px;top:136px;width:10px"></div><div class="cb" style="left:19px;top:130px"><svg style="left:1px;top:1px" width="8" height="7" viewBox="0 0 7 7" preserveAspectRatio="none"><path d="M0 2L0 5L2 7L3 7L7 3L7 0L2.5 4.5Z" fill="#000"/></svg></div><div class="t" style="left:35.5px;top:130px;letter-spacing:0.026px;">Jitter</div><div class="dotH" style="left:8px;top:152px;width:10px"></div><div class="cb" style="left:19px;top:146px"><svg style="left:1px;top:1px" width="8" height="7" viewBox="0 0 7 7" preserveAspectRatio="none"><path d="M0 2L0 5L2 7L3 7L7 3L7 0L2.5 4.5Z" fill="#000"/></svg></div><div class="t" style="left:35.5px;top:146px;letter-spacing:-0.527px;">Symbols</div><div class="dotH" style="left:8px;top:168px;width:10px"></div><div class="cb" style="left:19px;top:162px"><svg style="left:1px;top:1px" width="8" height="7" viewBox="0 0 7 7" preserveAspectRatio="none"><path d="M0 2L0 5L2 7L3 7L7 3L7 0L2.5 4.5Z" fill="#000"/></svg></div><div class="t" style="left:35.5px;top:162px;letter-spacing:-0.307px;">Symbol Error</div><div class="dotH" style="left:8px;top:184px;width:10px"></div><div class="cb" style="left:19px;top:178px"><svg style="left:1px;top:1px" width="8" height="7" viewBox="0 0 7 7" preserveAspectRatio="none"><path d="M0 2L0 5L2 7L3 7L7 3L7 0L2.5 4.5Z" fill="#000"/></svg></div><div class="t" style="left:35.5px;top:178px;letter-spacing:-0.316px;">equlizer</div><div class="dotH" style="left:8px;top:200px;width:10px"></div><div class="cb" style="left:19px;top:194px"><svg style="left:1px;top:1px" width="8" height="7" viewBox="0 0 7 7" preserveAspectRatio="none"><path d="M0 2L0 5L2 7L3 7L7 3L7 0L2.5 4.5Z" fill="#000"/></svg></div><div class="t" style="left:35.5px;top:194px;letter-spacing:-0.277px;">symbols_timestamp</div>
</div>
<div class="a" style="left:4px;top:695px;width:189px;height:18px;background:#d4d0c8"></div><div class="hl" style="left:4px;top:695px;width:189px;background:#000"></div><div class="a" style="left:4px;top:696px;width:15px;height:16px;background:#d4d0c8;border:1px solid;border-color:#fff #808080 #808080 #fff"><svg style="left:4px;top:3px" width="4" height="7"><path d="M4 0L0 3.5L4 7Z" fill="#808080"/></svg></div><div class="a" style="left:20px;top:696px;width:15px;height:16px;background:#d4d0c8;border:1px solid;border-color:#fff #808080 #808080 #fff"><svg style="left:4px;top:3px" width="4" height="7"><path d="M0 0L4 3.5L0 7Z" fill="#808080"/></svg></div><div class="vl" style="left:19px;top:696px;height:16px;background:#000"></div><div class="vl" style="left:35px;top:696px;height:16px;background:#000"></div><svg style="left:35px;top:695px" width="160" height="18" viewBox="0 0 160 18">
<path d="M1 0L10 17.5L69 17.5L76.5 0Z" fill="#fff"/>
<path d="M1.3 0.5L10 17.5" fill="none" stroke="#000" stroke-width="1"/>
<path d="M10 17.5L69 17.5" fill="none" stroke="#303030" stroke-width="1"/>
<path d="M69 17.5L76.5 0.5" fill="none" stroke="#000" stroke-width="1"/>
<path d="M71.7 10.5L75.2 17.5" fill="none" stroke="#000" stroke-width="1"/><path d="M75.2 17.5L131.6 17.5" fill="none" stroke="#303030" stroke-width="1"/><path d="M131.6 17.5L139.7 0.5" fill="none" stroke="#000" stroke-width="1"/>
</svg><div class="t" style="left:50px;top:699px;font-weight:bold;letter-spacing:0.654px;">Streams</div><div class="t" style="left:115.3px;top:699px;letter-spacing:0.477px;">T.38 Fax</div>
<div class="vl" style="left:196px;top:71px;height:649px;background:#fff"></div>
<div class="vl" style="left:200px;top:71px;height:23px;background:#808080"></div><div class="vl" style="left:201px;top:71px;height:23px;background:#fff"></div><div class="hl" style="left:199px;top:94px;width:825px;background:#808080"></div><div class="hl" style="left:199px;top:95px;width:825px;background:#fff"></div><svg style="left:206px;top:74px" width="14" height="14" viewBox="0 0 15 14" preserveAspectRatio="none">
<rect x=".5" y=".5" width="14" height="13" fill="#8c8848" stroke="#1c1c10" stroke-width="1"/>
<rect x="3" y="1" width="9" height="6" fill="#d8d4cc"/>
<rect x="3" y="9" width="9" height="4.5" fill="#101010"/>
<rect x="9" y="10" width="2" height="3" fill="#d8d4cc"/>
<rect x="12.5" y="1.5" width="1" height="1" fill="#d8d4cc"/>
</svg><div class="vl" style="left:233px;top:72px;height:20px;background:#a4a09c"></div><div class="vl" style="left:234px;top:72px;height:20px;background:#fff"></div><div class="a" style="left:237px;top:72px;width:3px;height:20px;border:1px solid;border-color:#fff #808080 #808080 #fff"></div><div class="trk" style="left:244px;top:71px;width:23px;height:22px;border:1px solid;border-color:#808080 #fff #fff #808080"></div><svg style="left:249px;top:76px" width="15" height="14" viewBox="0 0 15 14">
<rect x="0" y="0" width="15" height="14" fill="#188488"/>
<rect x="1.5" y="1.5" width="12" height="4" fill="#f6f266"/><rect x="1.5" y="8" width="12" height="4.5" fill="#f6f266"/>
<rect x="1" y="5.7" width="13" height="2" fill="#20508c"/>
<rect x="4" y="0.5" width="1.4" height="13" fill="#c82828"/>
</svg><svg style="left:270px;top:74px" width="16" height="16" viewBox="0 0 16 16">
<rect x="0" y="0" width="16" height="16" fill="#148a8c"/>
<path d="M1 13.5Q5 12 7.5 1.5Q10 12 15 13.5" fill="none" stroke="#48e8e8" stroke-width="1.1"/>
<path d="M7.5 1L7.5 16M0.5 13.5L15.5 13.5" fill="none" stroke="#e6e838" stroke-width="1.1"/>
</svg><div class="vl" style="left:292px;top:72px;height:20px;background:#a4a09c"></div><div class="vl" style="left:293px;top:72px;height:20px;background:#fff"></div><div class="trk" style="left:296px;top:71px;width:23px;height:22px;border:1px solid;border-color:#808080 #fff #fff #808080"></div><svg style="left:300px;top:75px" width="17" height="17" viewBox="0 0 17 17">
<path d="M1.8 3.5L6 2L9.5 2.8L9.5 13L6.5 15.5L1.8 15.5Z" fill="#fff" stroke="#101820" stroke-width="1.6"/>
<path d="M3.5 9L4.5 11L5.5 8.5L6.5 11L7.5 8" fill="none" stroke="#8a8430" stroke-width="1"/>
<path d="M7.5 12.5L9 9L14 5.5L15 6.8L10.5 10.5Z" fill="#181818"/>
<path d="M9.5 3.5Q12 2 13 5" fill="none" stroke="#202020" stroke-width="1.4"/>
</svg>
<div class="a" style="left:201px;top:97px;width:663px;height:425px;border:1px solid;border-color:#000 #fff #fff #000;background:#d4d0c8"></div><div class="vl" style="left:202px;top:98px;height:18px;background:#000"></div><div class="hl" style="left:202px;top:98px;width:660px;background:#000;z-index:2"></div><div class="a" style="left:203px;top:99px;width:15px;height:16px;background:#d4d0c8;border:1px solid;border-color:#fff #808080 #808080 #fff"><svg style="left:4px;top:3px" width="4" height="7"><path d="M4 0L0 3.5L4 7Z" fill="#808080"/></svg></div><div class="a" style="left:219px;top:99px;width:15px;height:16px;background:#d4d0c8;border:1px solid;border-color:#fff #808080 #808080 #fff"><svg style="left:4px;top:3px" width="4" height="7"><path d="M0 0L4 3.5L0 7Z" fill="#808080"/></svg></div><div class="vl" style="left:218px;top:99px;height:16px;background:#000"></div><div class="vl" style="left:234px;top:98px;height:18px;background:#000"></div><div class="hl" style="left:203px;top:115px;width:32px;background:#808080"></div><svg style="left:234px;top:98px" width="150" height="18" viewBox="0 0 150 18">
<path d="M1 18L10 0L79.5 0L88.5 18Z" fill="#fff"/>
<path d="M1.5 17.5L10 0.5" fill="none" stroke="#000" stroke-width="1.2"/>
<path d="M79.5 0.5L88.5 17.5" fill="none" stroke="#000" stroke-width="1"/>
<path d="M83.5 7.5L87 0.5L131 0.5L140 17.5" fill="none" stroke="#000" stroke-width="1"/>
</svg><div class="hl" style="left:322px;top:115px;width:540px;background:#000"></div><div class="t" style="left:248.5px;top:102px;font-weight:bold;letter-spacing:0.439px;">Whole List</div><div class="t" style="left:326px;top:102px;letter-spacing:0.508px;">Errors</div><div class="a" style="left:202px;top:116px;width:66px;height:19px;background:#d4d0c8;border:1px solid;border-color:#fff #404040 #404040 #fff;box-shadow:inset -1px -1px 0 #808080"></div><div class="a" style="left:268px;top:116px;width:578px;height:19px;background:#d4d0c8;border:1px solid;border-color:#fff #404040 #404040 #fff;box-shadow:inset -1px -1px 0 #808080"></div><div class="t" style="left:206px;top:118px;width:58px;letter-spacing:-0.346px;">Time (Min.Sec</div><div class="t" style="left:271.5px;top:118px;letter-spacing:-0.276px;">Description</div><div class="a" style="left:202px;top:135px;width:644px;height:369px;background:#fff;overflow:hidden"><div class="a" style="left:0;top:0;width:65px;height:369px;background:#f3f9f3"></div><div class="t" style="left:2.5px;top:20px;letter-spacing:0.062px;">03:43.536</div><div class="t" style="left:69px;top:20px;letter-spacing:-0.118px;">E:\Backup\GL insight related\GL Insight\GooD T.38Files\</div><div class="t" style="left:336px;top:20px;letter-spacing:-0.098px;">T38_Test_154_10sites_analogfax_ta-2526-empfänger_210_ok_</div><div class="t" style="left:2.5px;top:58px;letter-spacing:0.062px;">03:43.536</div><div class="t" style="left:69px;top:58px;letter-spacing:-0.118px;">E:\Backup\GL insight related\GL Insight\GooD T.38Files\</div><div class="t" style="left:336px;top:58px;letter-spacing:-0.098px;">T38_Test_154_10sites_analogfax_ta-2526-empfänger_210_ok_</div><div class="t" style="left:2.5px;top:96px;letter-spacing:0.062px;">03:43.536</div><div class="t" style="left:69px;top:96px;letter-spacing:-0.284px;">TIFF File Parameters:</div><div class="t" style="left:2.5px;top:115px;letter-spacing:0.062px;">03:43.536</div><div class="t" style="left:69px;top:115px;letter-spacing:-0.688px;">TIFF_FILE_COMPRESSION_METHOD_2D_MR</div><div class="t" style="left:2.5px;top:134px;letter-spacing:0.062px;">03:43.536</div><div class="t" style="left:69px;top:134px;letter-spacing:-0.220px;">Number Of Pixels Per Line: 1728</div><div class="t" style="left:2.5px;top:153px;letter-spacing:0.062px;">03:43.536</div><div class="t" style="left:69px;top:153px;letter-spacing:-0.227px;">Number Of Good Lines: 1137</div><div class="t" style="left:2.5px;top:172px;letter-spacing:0.062px;">03:43.536</div><div class="t" style="left:69px;top:172px;letter-spacing:-0.273px;">Number Of Bad Lines: 7</div><div class="t" style="left:2.5px;top:191px;letter-spacing:0.062px;">03:43.536</div><div class="t" style="left:69px;top:191px;letter-spacing:-0.698px;">DEMODULATOR_STANDARD_NO_SIGNAL</div><div class="t" style="left:2.5px;top:210px;letter-spacing:0.062px;">03:43.536</div><div class="t" style="left:69px;top:210px;letter-spacing:-0.817px;">DEMODULATOR_SPEED_NO_SIGNAL</div><div class="t" style="left:2.5px;top:229px;letter-spacing:0.062px;">03:43.735</div><div class="t" style="left:69px;top:229px;letter-spacing:-0.160px;">V21 Preamble were received on IP of side 'a'</div><div class="t" style="left:2.5px;top:248px;letter-spacing:0.062px;">03:43.735</div><div class="t" style="left:69px;top:248px;letter-spacing:-0.190px;">T38 Receive V21 on IP of side 'a'</div><div class="t" style="left:2.5px;top:267px;letter-spacing:0.062px;">03:43.735</div><div class="t" style="left:69px;top:267px;letter-spacing:-0.690px;">DEMODULATOR_STANDARD_V21_CHANNEL_2</div><div class="t" style="left:2.5px;top:286px;letter-spacing:0.062px;">03:43.735</div><div class="t" style="left:69px;top:286px;letter-spacing:-0.759px;">DEMODULATOR_SPEED_300</div><div class="t" style="left:2.5px;top:305px;letter-spacing:0.062px;">03:44.835</div><div class="t" style="left:69px;top:305px;letter-spacing:-0.166px;">MPS frame was received on IP of side 'a'</div><div class="t" style="left:2.5px;top:324px;letter-spacing:0.062px;">03:44.835</div><div class="t" style="left:69px;top:324px;letter-spacing:-0.234px;">T30 Frame Name: MPS was transmitted in ORG -&gt; ANS direction</div><div class="t" style="left:2.5px;top:343px;letter-spacing:0.062px;">03:44.835</div><div class="t" style="left:69px;top:343px;letter-spacing:-1.415px;">MPS</div><div class="t" style="left:2.5px;top:362px;letter-spacing:0.062px;">03:44.835</div><div class="t" style="left:71px;top:362px;letter-spacing:-0.057px;">FF C8 F2</div></div><div class="trk" style="left:846px;top:116px;width:16px;height:388px"></div><div class="sb" style="left:846px;top:116px;width:16px;height:16px"><svg style="left:4px;top:5px" width="7" height="4"><path d="M0 4L3.5 0L7 4Z" fill="#000"/></svg></div><div class="sb" style="left:846px;top:328px;width:16px;height:11px"></div><div class="sb" style="left:846px;top:488px;width:16px;height:16px"><svg style="left:4px;top:6px" width="7" height="4"><path d="M0 0L3.5 4L7 0Z" fill="#000"/></svg></div><div class="trk" style="left:202px;top:504px;width:644px;height:16px"></div><div class="sb" style="left:202px;top:504px;width:16px;height:16px"><svg style="left:5px;top:4px" width="4" height="7"><path d="M4 0L0 3.5L4 7Z" fill="#000"/></svg></div><div class="sb" style="left:218px;top:504px;width:470px;height:16px"></div><div class="sb" style="left:830px;top:504px;width:16px;height:16px"><svg style="left:6px;top:4px" width="4" height="7"><path d="M0 0L4 3.5L0 7Z" fill="#000"/></svg></div>
<div class="a" style="left:868px;top:97px;width:155px;height:425px;border:1px solid;border-color:#000 #fff #fff #000;background:#fff"></div><div class="vl" style="left:1022px;top:98px;height:423px;background:#d4d0c8"></div><div class="hl" style="left:869px;top:520px;width:153px;background:#d4d0c8"></div><div class="dotV" style="left:878px;top:110px;height:136px"></div><div class="pm p" style="left:874px;top:102px"></div><div class="dotH" style="left:884px;top:106px;width:4px"></div><div class="cb" style="left:889px;top:100px"><svg style="left:1px;top:1px" width="8" height="7" viewBox="0 0 7 7" preserveAspectRatio="none"><path d="M0 2L0 5L2 7L3 7L7 3L7 0L2.5 4.5Z" fill="#000"/></svg></div><div class="t" style="left:906px;top:100px;letter-spacing:-0.498px;">DataPump</div><div class="pm p" style="left:874px;top:118px"></div><div class="dotH" style="left:884px;top:122px;width:4px"></div><div class="cb" style="left:889px;top:116px"><svg style="left:1px;top:1px" width="8" height="7" viewBox="0 0 7 7" preserveAspectRatio="none"><path d="M0 2L0 5L2 7L3 7L7 3L7 0L2.5 4.5Z" fill="#000"/></svg></div><div class="t" style="left:906px;top:116px;letter-spacing:-0.490px;">T30</div><div class="dotH" style="left:878px;top:138px;width:10px"></div><div class="cb" style="left:889px;top:132px"><svg style="left:1px;top:1px" width="8" height="7" viewBox="0 0 7 7" preserveAspectRatio="none"><path d="M0 2L0 5L2 7L3 7L7 3L7 0L2.5 4.5Z" fill="#000"/></svg></div><div class="t" style="left:906px;top:132px;letter-spacing:-0.630px;">TIFF</div><div class="dotH" style="left:878px;top:154px;width:10px"></div><div class="cb" style="left:889px;top:148px"><svg style="left:1px;top:1px" width="8" height="7" viewBox="0 0 7 7" preserveAspectRatio="none"><path d="M0 2L0 5L2 7L3 7L7 3L7 0L2.5 4.5Z" fill="#000"/></svg></div><div class="t" style="left:906px;top:148px;letter-spacing:-0.602px;">Timing</div><div class="pm p" style="left:874px;top:166px"></div><div class="dotH" style="left:884px;top:170px;width:4px"></div><div class="cb" style="left:889px;top:164px"><svg style="left:1px;top:1px" width="8" height="7" viewBox="0 0 7 7" preserveAspectRatio="none"><path d="M0 2L0 5L2 7L3 7L7 3L7 0L2.5 4.5Z" fill="#000"/></svg></div><div class="t" style="left:906px;top:164px;letter-spacing:-0.191px;">IWF</div><div class="pm p" style="left:874px;top:182px"></div><div class="dotH" style="left:884px;top:186px;width:4px"></div><div class="cb" style="left:889px;top:180px"><svg style="left:1px;top:1px" width="8" height="7" viewBox="0 0 7 7" preserveAspectRatio="none"><path d="M0 2L0 5L2 7L3 7L7 3L7 0L2.5 4.5Z" fill="#000"/></svg></div><div class="t" style="left:906px;top:180px;letter-spacing:-0.490px;">T38</div><div class="pm p" style="left:874px;top:198px"></div><div class="dotH" style="left:884px;top:202px;width:4px"></div><div class="cb" style="left:889px;top:196px"><svg style="left:1px;top:1px" width="8" height="7" viewBox="0 0 7 7" preserveAspectRatio="none"><path d="M0 2L0 5L2 7L3 7L7 3L7 0L2.5 4.5Z" fill="#000"/></svg></div><div class="t" style="left:906px;top:196px;letter-spacing:-0.080px;">T.30 Decoder Analyzer</div><div class="dotH" style="left:878px;top:218px;width:10px"></div><div class="cb" style="left:889px;top:212px"><svg style="left:1px;top:1px" width="8" height="7" viewBox="0 0 7 7" preserveAspectRatio="none"><path d="M0 2L0 5L2 7L3 7L7 3L7 0L2.5 4.5Z" fill="#000"/></svg></div><div class="t" style="left:906px;top:212px;letter-spacing:-0.271px;">Signal Analyzers</div><div class="pm p" style="left:874px;top:230px"></div><div class="dotH" style="left:884px;top:234px;width:4px"></div><div class="cb" style="left:889px;top:228px"><svg style="left:1px;top:1px" width="8" height="7" viewBox="0 0 7 7" preserveAspectRatio="none"><path d="M0 2L0 5L2 7L3 7L7 3L7 0L2.5 4.5Z" fill="#000"/></svg></div><div class="t" style="left:906px;top:228px;letter-spacing:-0.221px;">Graph visibility</div><div class="pm p" style="left:874px;top:246px"></div><div class="dotH" style="left:884px;top:250px;width:4px"></div><div class="cb" style="left:889px;top:244px"><svg style="left:1px;top:1px" width="8" height="7" viewBox="0 0 7 7" preserveAspectRatio="none"><path d="M0 2L0 5L2 7L3 7L7 3L7 0L2.5 4.5Z" fill="#000"/></svg></div><div class="t" style="left:906px;top:244px;letter-spacing:-0.276px;">Errors</div><div class="a" style="left:869px;top:502px;width:153px;height:18px;background:#d4d0c8"></div><div class="hl" style="left:869px;top:502px;width:153px;background:#000"></div><div class="a" style="left:870px;top:503px;width:15px;height:16px;background:#d4d0c8;border:1px solid;border-color:#fff #808080 #808080 #fff"><svg style="left:4px;top:3px" width="4" height="7"><path d="M4 0L0 3.5L4 7Z" fill="#808080"/></svg></div><div class="a" style="left:886px;top:503px;width:15px;height:16px;background:#d4d0c8;border:1px solid;border-color:#fff #808080 #808080 #fff"><svg style="left:4px;top:3px" width="4" height="7"><path d="M0 0L4 3.5L0 7Z" fill="#000"/></svg></div><svg style="left:900px;top:502px" width="124" height="18" viewBox="0 0 124 18">
<path d="M2.5 0L11.5 17.5L67.3 17.5L76 0Z" fill="#fff"/>
<path d="M2.7 0.5L11.5 17.5" fill="none" stroke="#000" stroke-width="1"/>
<path d="M11.5 17.5L67.3 17.5L122 17.5" fill="none" stroke="#303030" stroke-width="1"/>
<path d="M67.3 17.5L76 0.5" fill="none" stroke="#000" stroke-width="1"/>
<path d="M71.2 10.5L74.75 17.5" fill="none" stroke="#000" stroke-width="1"/>
<path d="M118.5 17.5L122 10" fill="none" stroke="#000" stroke-width="1"/>
</svg><div class="t" style="left:916.5px;top:506px;font-weight:bold;letter-spacing:0.398px;">T.38 Fax</div><div class="t" style="left:980px;top:506px;letter-spacing:0.508px;">Errors</div>
<svg style="left:205px;top:532px" width="6" height="5" viewBox="0 0 6 5"><path d="M0.3 0L5.7 5M0.3 5L5.7 0" stroke="#000" stroke-width="1.7" fill="none"/></svg><div class="hl" style="left:200px;top:521px;width:824px;background:#fff"></div><div class="hl" style="left:200px;top:525px;width:824px;background:#808080"></div><svg style="left:207px;top:545px" width="4" height="7"><path d="M4 0L0 3.5L4 7Z" fill="#808080"/></svg><div class="a" style="left:204px;top:559px;width:3px;height:157px;border-left:1px solid #fff;background:#8a8882"></div><div class="a" style="left:208px;top:559px;width:3px;height:157px;border-left:1px solid #fff;background:#8a8882"></div><div class="a" style="left:220px;top:536px;width:793px;height:173px;border:1px solid;border-color:#808080 #fff #fff #808080"></div><svg style="left:221px;top:537px" width="791" height="171" viewBox="221 537 791 171" shape-rendering="crispEdges"><rect x="221" y="537" width="791" height="151" fill="#000"/><path d="M232.5 537V688M252.5 537V688M272.5 537V688M292.5 537V688M312.5 537V688M332.5 537V688M352.5 537V688M372.5 537V688M392.5 537V688M412.5 537V688M432.5 537V688M452.5 537V688M472.5 537V688M492.5 537V688M512.5 537V688M532.5 537V688M552.5 537V688M572.5 537V688M592.5 537V688M612.5 537V688M632.5 537V688M652.5 537V688M672.5 537V688M692.5 537V688M712.5 537V688M732.5 537V688M752.5 537V688M772.5 537V688M792.5 537V688M812.5 537V688M832.5 537V688M852.5 537V688M872.5 537V688M892.5 537V688M912.5 537V688M932.5 537V688M952.5 537V688M972.5 537V688M992.5 537V688" stroke="#3a6a3a" stroke-width="1" stroke-dasharray="3 3" fill="none"/><path d="M221 548.5H1012M221 568.5H1012M221 588.5H1012M221 608.5H1012M221 628.5H1012M221 648.5H1012M221 668.5H1012" stroke="#3a6a3a" stroke-width="1" stroke-dasharray="3 3" fill="none"/><path d="M221 572.5H1012" stroke="#30e030" stroke-width="1"/><rect x="240" y="560" width="4" height="23" fill="#30e030"/><rect x="243" y="557" width="1" height="33" fill="#30e030"/><rect x="247" y="557" width="1" height="33" fill="#30e030"/><rect x="253" y="557" width="1" height="33" fill="#30e030"/><rect x="254" y="560" width="74" height="23" fill="#30e030"/><rect x="254" y="561" width="74" height="21" fill="#f8a4a4"/><rect x="328" y="560" width="3.5" height="23" fill="#30e030"/><rect x="331" y="557" width="1" height="33" fill="#30e030"/><rect x="335.5" y="557" width="1.2" height="33" fill="#30e030"/><rect x="337" y="560" width="76" height="23" fill="#30e030"/><rect x="337" y="561" width="76" height="21" fill="#f8a4a4"/><rect x="413" y="560" width="3.5" height="23" fill="#30e030"/><rect x="416" y="557" width="1" height="33" fill="#30e030"/><rect x="419.5" y="557" width="1.2" height="33" fill="#30e030"/><rect x="421" y="560" width="74" height="23" fill="#30e030"/><rect x="421" y="561" width="74" height="21" fill="#f8a4a4"/><rect x="495" y="560" width="3.5" height="23" fill="#30e030"/><rect x="498" y="557" width="1" height="33" fill="#30e030"/><rect x="502.0" y="557" width="1.2" height="33" fill="#30e030"/><rect x="503.5" y="560" width="67.5" height="23" fill="#30e030"/><rect x="503.5" y="561" width="67.5" height="21" fill="#f8a4a4"/><rect x="573" y="557" width="1" height="33" fill="#30e030"/><rect x="578.5" y="557" width="1.2" height="33" fill="#30e030"/><rect x="580" y="560" width="65" height="23" fill="#30e030"/><rect x="580" y="561" width="65" height="21" fill="#f8a4a4"/><rect x="645" y="560" width="3.5" height="23" fill="#30e030"/><rect x="648" y="557" width="1" height="33" fill="#30e030"/><rect x="652.5" y="557" width="1.2" height="33" fill="#30e030"/><rect x="654" y="560" width="63.5" height="23" fill="#30e030"/><rect x="654" y="561" width="63.5" height="21" fill="#f8a4a4"/><rect x="717.5" y="560" width="3.5" height="23" fill="#30e030"/><rect x="720.5" y="557" width="1" height="33" fill="#30e030"/><rect x="724.5" y="557" width="1.2" height="33" fill="#30e030"/><rect x="726" y="560" width="57.5" height="23" fill="#30e030"/><rect x="726" y="561" width="57.5" height="21" fill="#f8a4a4"/><rect x="783.5" y="560" width="3.5" height="23" fill="#30e030"/><rect x="786.5" y="557" width="1" height="33" fill="#30e030"/><rect x="791.0" y="557" width="1.2" height="33" fill="#30e030"/><rect x="792.5" y="560" width="65.0" height="23" fill="#30e030"/><rect x="792.5" y="561" width="65.0" height="21" fill="#f8a4a4"/><rect x="857.5" y="560" width="3.5" height="23" fill="#30e030"/><rect x="860.5" y="557" width="1" height="33" fill="#30e030"/><rect x="864.5" y="557" width="1.2" height="33" fill="#30e030"/><rect x="866" y="560" width="65.5" height="23" fill="#30e030"/><rect x="866" y="561" width="65.5" height="21" fill="#f8a4a4"/><rect x="931.5" y="560" width="3.5" height="23" fill="#30e030"/><rect x="934.5" y="557" width="1" height="33" fill="#30e030"/><rect x="939.5" y="557" width="1.2" height="33" fill="#30e030"/><rect x="941" y="560" width="62" height="23" fill="#30e030"/><rect x="941" y="561" width="62" height="21" fill="#f8a4a4"/><rect x="1005" y="557" width="1" height="33" fill="#30e030"/><rect x="1010" y="560" width="2" height="23" fill="#30e030"/><path d="M221 617.5H1012" stroke="#30e030" stroke-width="1"/><rect x="222" y="606" width="4" height="23" fill="#78e078"/><rect x="226" y="603" width="1" height="33" fill="#30e030"/><rect x="235" y="606" width="3.5" height="23" fill="#78e078"/><rect x="238.5" y="603" width="1" height="33" fill="#30e030"/><rect x="251" y="603" width="1.6" height="33" fill="#30e030"/><rect x="332.0" y="605" width="2" height="24" fill="#30e030"/><rect x="333.5" y="603" width="1.2" height="33" fill="#30e030"/><rect x="417.0" y="605" width="2" height="24" fill="#30e030"/><rect x="418.5" y="603" width="1.2" height="33" fill="#30e030"/><rect x="498.5" y="605" width="2" height="24" fill="#30e030"/><rect x="500" y="603" width="1.2" height="33" fill="#30e030"/><rect x="574.5" y="605" width="2" height="24" fill="#30e030"/><rect x="576" y="603" width="1.2" height="33" fill="#30e030"/><rect x="648.5" y="605" width="2" height="24" fill="#30e030"/><rect x="650" y="603" width="1.2" height="33" fill="#30e030"/><rect x="721.5" y="605" width="2" height="24" fill="#30e030"/><rect x="723" y="603" width="1.2" height="33" fill="#30e030"/><rect x="787.0" y="605" width="2" height="24" fill="#30e030"/><rect x="788.5" y="603" width="1.2" height="33" fill="#30e030"/><rect x="861.0" y="605" width="2" height="24" fill="#30e030"/><rect x="862.5" y="603" width="1.2" height="33" fill="#30e030"/><rect x="935.5" y="605" width="2" height="24" fill="#30e030"/><rect x="937" y="603" width="1.2" height="33" fill="#30e030"/><rect x="1006.5" y="605" width="2" height="24" fill="#30e030"/><rect x="1008" y="603" width="1.2" height="33" fill="#30e030"/><rect x="221" y="688" width="791" height="20" fill="#d9d9d9"/><rect x="221" y="688" width="1" height="20" fill="#101010"/><rect x="222" y="685" width="1" height="22" fill="#ecec58"/><rect x="301" y="685" width="1" height="22" fill="#ecec58"/><rect x="380" y="685" width="1" height="22" fill="#ecec58"/><rect x="459" y="685" width="1" height="22" fill="#ecec58"/><rect x="538" y="685" width="1" height="22" fill="#ecec58"/><rect x="617" y="685" width="1" height="22" fill="#ecec58"/><rect x="696" y="685" width="1" height="22" fill="#ecec58"/><rect x="775" y="685" width="1" height="22" fill="#ecec58"/><rect x="854" y="685" width="1" height="22" fill="#ecec58"/><rect x="933" y="685" width="1" height="22" fill="#ecec58"/><path d="M221 688.5H1012" stroke="#6a8a6a" stroke-width="1" stroke-dasharray="3 3" fill="none"/><rect x="571" y="537" width="1.3" height="171" fill="#c83030"/><path d="M566.5 537L576.5 537L571.5 544Z M566.5 708L576.5 708L571.5 701Z" fill="#c83030" shape-rendering="auto"/><rect x="962" y="666" width="32" height="13" fill="#d9d9d9"/></svg><div class="t" style="left:255px;top:565px;font-size:10px;line-height:12px;color:#000;letter-spacing:0.345px;">V17,14400</div><div class="t" style="left:338px;top:565px;font-size:10px;line-height:12px;color:#000;letter-spacing:0.345px;">V17,14400</div><div class="t" style="left:422px;top:565px;font-size:10px;line-height:12px;color:#000;letter-spacing:0.345px;">V17,14400</div><div class="t" style="left:504.5px;top:565px;font-size:10px;line-height:12px;color:#000;letter-spacing:0.345px;">V17,14400</div><div class="t" style="left:581px;top:565px;font-size:10px;line-height:12px;color:#000;letter-spacing:0.345px;">V17,14400</div><div class="t" style="left:655px;top:565px;font-size:10px;line-height:12px;color:#000;letter-spacing:0.345px;">V17,14400</div><div class="t" style="left:727px;top:565px;font-size:10px;line-height:12px;color:#000;letter-spacing:0.345px;">V17,14400</div><div class="t" style="left:793.5px;top:565px;font-size:10px;line-height:12px;color:#000;letter-spacing:0.345px;">V17,14400</div><div class="t" style="left:867px;top:565px;font-size:10px;line-height:12px;color:#000;letter-spacing:0.345px;">V17,14400</div><div class="t" style="left:942px;top:565px;font-size:10px;line-height:12px;color:#000;letter-spacing:0.345px;">V17,14400</div><div class="t" style="left:245px;top:593px;font-size:9px;line-height:11px;color:#fff;letter-spacing:-0.258px;-webkit-text-stroke:.3px #fff;">[1</div><div class="t" style="left:252px;top:593px;font-size:9px;line-height:11px;color:#fff;letter-spacing:-0.172px;-webkit-text-stroke:.3px #fff;">‹14400</div><div class="t" style="left:333px;top:593px;font-size:9px;line-height:11px;color:#fff;letter-spacing:-0.505px;-webkit-text-stroke:.3px #fff;">M14400</div><div class="t" style="left:418px;top:593px;font-size:9px;line-height:11px;color:#fff;letter-spacing:-0.505px;-webkit-text-stroke:.3px #fff;">M14400</div><div class="t" style="left:500px;top:593px;font-size:9px;line-height:11px;color:#fff;letter-spacing:-0.505px;-webkit-text-stroke:.3px #fff;">M14400</div><div class="t" style="left:575px;top:593px;font-size:9px;line-height:11px;color:#fff;letter-spacing:-0.505px;-webkit-text-stroke:.3px #fff;">M14400</div><div class="t" style="left:650px;top:593px;font-size:9px;line-height:11px;color:#fff;letter-spacing:-0.505px;-webkit-text-stroke:.3px #fff;">M14400</div><div class="t" style="left:722px;top:593px;font-size:9px;line-height:11px;color:#fff;letter-spacing:-0.505px;-webkit-text-stroke:.3px #fff;">M14400</div><div class="t" style="left:787.5px;top:593px;font-size:9px;line-height:11px;color:#fff;letter-spacing:-0.505px;-webkit-text-stroke:.3px #fff;">M14400</div><div class="t" style="left:861px;top:593px;font-size:9px;line-height:11px;color:#fff;letter-spacing:-0.505px;-webkit-text-stroke:.3px #fff;">M14400</div><div class="t" style="left:936px;top:593px;font-size:9px;line-height:11px;color:#fff;letter-spacing:-0.505px;-webkit-text-stroke:.3px #fff;">M14400</div><div class="t" style="left:1006px;top:593px;font-size:9px;line-height:11px;color:#fff;width:6px;letter-spacing:-0.016px;-webkit-text-stroke:.3px #fff;">E</div><div class="t" style="left:227.5px;top:640px;font-size:9px;line-height:11px;color:#fff;letter-spacing:1.000px;-webkit-text-stroke:.3px #fff;">DIDICFR</div><div class="t" style="left:336px;top:640px;font-size:9px;line-height:11px;color:#fff;letter-spacing:0.167px;-webkit-text-stroke:.3px #fff;">MCF</div><div class="t" style="left:421px;top:640px;font-size:9px;line-height:11px;color:#fff;letter-spacing:0.167px;-webkit-text-stroke:.3px #fff;">MCF</div><div class="t" style="left:503px;top:640px;font-size:9px;line-height:11px;color:#fff;letter-spacing:0.167px;-webkit-text-stroke:.3px #fff;">MCF</div><div class="t" style="left:578px;top:640px;font-size:9px;line-height:11px;color:#fff;letter-spacing:0.167px;-webkit-text-stroke:.3px #fff;">MCF</div><div class="t" style="left:653px;top:640px;font-size:9px;line-height:11px;color:#fff;letter-spacing:0.167px;-webkit-text-stroke:.3px #fff;">MCF</div><div class="t" style="left:725px;top:640px;font-size:9px;line-height:11px;color:#fff;letter-spacing:0.167px;-webkit-text-stroke:.3px #fff;">MCF</div><div class="t" style="left:790.5px;top:640px;font-size:9px;line-height:11px;color:#fff;letter-spacing:0.167px;-webkit-text-stroke:.3px #fff;">MCF</div><div class="t" style="left:864.5px;top:640px;font-size:9px;line-height:11px;color:#fff;letter-spacing:0.167px;-webkit-text-stroke:.3px #fff;">MCF</div><div class="t" style="left:938.5px;top:640px;font-size:9px;line-height:11px;color:#fff;letter-spacing:0.167px;-webkit-text-stroke:.3px #fff;">MCF</div><div class="t" style="left:1009px;top:640px;font-size:9px;line-height:11px;color:#fff;width:3px;letter-spacing:0.500px;-webkit-text-stroke:.3px #fff;">M</div><div class="t" style="left:226.5px;top:692px;font-size:10px;line-height:12px;color:#000;letter-spacing:0.750px;">0:0.0</div><div class="t" style="left:305.5px;top:692px;font-size:10px;line-height:12px;color:#000;letter-spacing:0.633px;">0:50.479</div><div class="t" style="left:384.5px;top:692px;font-size:10px;line-height:12px;color:#000;letter-spacing:0.633px;">1:40.959</div><div class="t" style="left:463.5px;top:692px;font-size:10px;line-height:12px;color:#000;letter-spacing:0.633px;">2:31.439</div><div class="t" style="left:542.5px;top:692px;font-size:10px;line-height:12px;color:#000;letter-spacing:0.633px;">3:21.919</div><div class="t" style="left:621.5px;top:692px;font-size:10px;line-height:12px;color:#000;letter-spacing:0.633px;">4:12.398</div><div class="t" style="left:700.5px;top:692px;font-size:10px;line-height:12px;color:#000;letter-spacing:0.661px;">5:2.878</div><div class="t" style="left:779.5px;top:692px;font-size:10px;line-height:12px;color:#000;letter-spacing:0.633px;">5:53.358</div><div class="t" style="left:858.5px;top:692px;font-size:10px;line-height:12px;color:#000;letter-spacing:0.633px;">6:43.838</div><div class="t" style="left:937.5px;top:692px;font-size:10px;line-height:12px;color:#000;letter-spacing:0.633px;">7:34.318</div><div class="t" style="left:962px;top:668px;font-size:10px;line-height:12px;color:#000;letter-spacing:0.531px;">3:43.5</div>
<div class="hl" style="left:0;top:720px;width:1024px;background:#808080"></div>
<div class="hl" style="left:0;top:721px;width:1024px;background:#fff"></div>
<div class="t" style="left:1.5px;top:726px;letter-spacing:-0.259px;">Ready</div>
<div class="a" style="left:0;top:724px;width:933px;height:17px;border:1px solid;border-color:#d4d0c8 #fff #fff #d4d0c8"></div>
<div class="vl" style="left:1022px;top:40px;height:27px;background:#808080"></div><div class="vl" style="left:1023px;top:40px;height:27px;background:#fff"></div>
<div class="vl" style="left:1022px;top:71px;height:23px;background:#808080"></div><div class="vl" style="left:1023px;top:71px;height:23px;background:#fff"></div>
<div class="a" style="left:935px;top:724px;width:27px;height:17px;border:1px solid;border-color:#808080 #fff #fff #808080"></div>
<div class="a" style="left:963px;top:724px;width:29px;height:17px;border:1px solid;border-color:#808080 #fff #fff #808080"></div>
<div class="a" style="left:993px;top:724px;width:30px;height:17px;border:1px solid;border-color:#808080 #fff #fff #808080"></div>
<div class="t" style="left:965px;top:726px;letter-spacing:-1.188px;">NUM</div>
</body></html>
